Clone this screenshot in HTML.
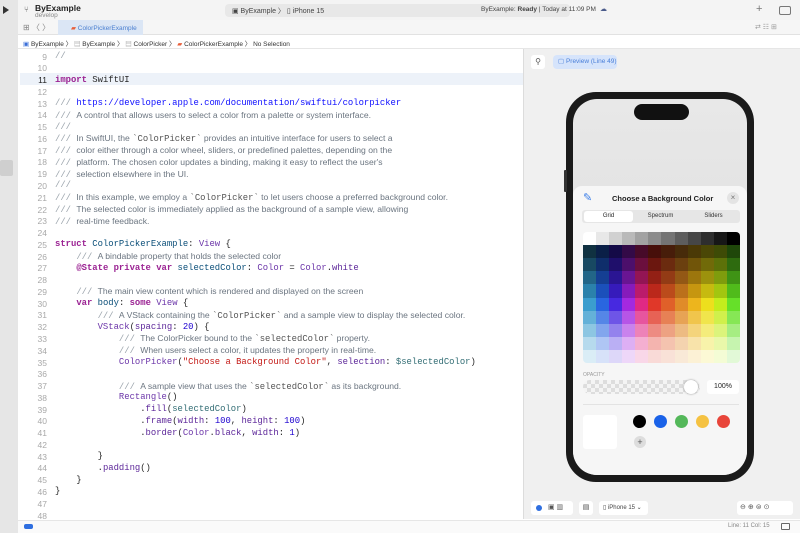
<!DOCTYPE html>
<html><head><meta charset="utf-8"><style>
*{margin:0;padding:0;box-sizing:border-box}
body{width:800px;height:533px;overflow:hidden;background:#fff;font-family:"Liberation Sans",sans-serif;position:relative}
.abs{position:absolute}
.ln{position:absolute;left:20px;width:27px;text-align:right;font-size:8.5px;color:#a8a8a8;font-family:"Liberation Sans",sans-serif}
.cl{position:absolute;left:55px;font-family:"Liberation Mono",monospace;font-size:8.9px;color:#262626;white-space:pre;line-height:12px}
.cl span{vertical-align:baseline}
.c{font-family:"Liberation Sans",sans-serif;color:#6b7580;font-size:8.6px}
.cm{color:#9aa3ab}
.k{color:#9b2393;font-weight:bold}
.t{color:#0b4f79}
.ty{color:#6c36a9}
.p{color:#326d74}
.s{color:#c41a16}
.n{color:#1c00cf}
.f{color:#5c2699}
.u{color:#0e0eff}
.bt{font-family:"Liberation Mono",monospace;color:#555}
</style></head><body>
<div class="abs" style="left:0;top:0;width:800px;height:20px;background:#f4f4f4"></div>
<div class="abs" style="left:0;top:0;width:18px;height:533px;background:#e6e6e6"></div>
<div class="abs" style="left:0;top:160px;width:13px;height:16px;background:#cfcfcf;border-radius:2px"></div>
<div class="abs" style="left:3px;top:6px;width:0;height:0;border-left:6px solid #333;border-top:4px solid transparent;border-bottom:4px solid transparent"></div>
<div class="abs" style="left:24px;top:5px;font-size:8px;color:#666">⑂</div>
<div class="abs" style="left:35px;top:3px;font-size:8.5px;font-weight:bold;color:#222">ByExample</div>
<div class="abs" style="left:35px;top:12px;font-size:6.5px;color:#888">develop</div>
<div class="abs" style="left:225px;top:4px;width:345px;height:13px;background:#e8e8e8;border-radius:4px"></div>
<div class="abs" style="left:232px;top:6px;font-size:7px;color:#444">▣ ByExample 〉 ▯ iPhone 15</div>
<div class="abs" style="left:481px;top:6px;font-size:6.5px;color:#444">ByExample: <b>Ready</b> | Today at 11:09 PM</div>
<div class="abs" style="left:600px;top:5px;font-size:7px;color:#4a5a8a">☁</div>
<div class="abs" style="left:756px;top:3px;font-size:11px;color:#777">+</div>
<div class="abs" style="left:779px;top:6px;width:12px;height:9px;border:1px solid #777;border-radius:2px"></div>
<div class="abs" style="left:18px;top:20px;width:782px;height:15px;background:#f6f6f6;border-bottom:1px solid #e2e2e2"></div>
<div class="abs" style="left:23px;top:22px;font-size:8px;color:#888">⊞ 〈 〉</div>
<div class="abs" style="left:58px;top:20px;width:85px;height:15px;background:#dbe6f5"></div>
<div class="abs" style="left:71px;top:24px;font-size:6.5px;color:#4a7fd0"><span style="color:#e8603c">▰</span> ColorPickerExample</div>
<div class="abs" style="left:755px;top:23px;font-size:7px;color:#999">⇄ ☷ ⊞</div>
<div class="abs" style="left:18px;top:36px;width:782px;height:13px;background:#fff;border-bottom:1px solid #e6e6e6"></div>
<div class="abs" style="left:23px;top:38px;font-size:6.5px;color:#333"><span style="color:#3b6fd8">▣</span> ByExample 〉 <span style="color:#888">▤</span> ByExample 〉 <span style="color:#888">▤</span> ColorPicker 〉 <span style="color:#e8603c">▰</span> ColorPickerExample 〉 No Selection</div>
<div class="abs" style="left:20px;top:73px;width:503px;height:12px;background:#edf2f9"></div>
<div id="code"></div>
<div class="abs" style="left:523px;top:49px;width:277px;height:470px;background:#f0f0f0;border-left:1px solid #dcdcdc"></div>
<div class="abs" style="left:531px;top:55px;width:14px;height:14px;background:#fff;border-radius:3px;font-size:8px;text-align:center;line-height:14px;color:#555">⚲</div>
<div class="abs" style="left:553px;top:55px;width:64px;height:14px;background:#d6e4fb;border-radius:4px;font-size:6.5px;color:#4a7fd8;line-height:14px;padding-left:5px">▢ Preview (Line 49)</div>
<div class="abs" style="left:566px;top:92px;width:188px;height:390px;background:#1a1a1a;border-radius:30px"></div>
<div class="abs" style="left:564px;top:170px;width:3px;height:22px;background:#333;border-radius:1px"></div>
<div class="abs" style="left:573px;top:99px;width:174px;height:376px;background:linear-gradient(#e8e8e8,#e0e0e0 50%,#dadada);border-radius:24px;overflow:hidden">
 <div class="abs" style="left:0;top:87px;width:174px;height:300px;background:#f6f6f6;border-radius:9px 9px 0 0"></div>
</div>
<div class="abs" style="left:634px;top:104px;width:55px;height:16px;background:#111;border-radius:8px"></div>
<div class="abs" style="left:583px;top:191px;font-size:11px;color:#3b7ee8">✎</div>
<div class="abs" style="left:612px;top:194px;font-size:7.5px;font-weight:bold;color:#222">Choose a Background Color</div>
<div class="abs" style="left:727px;top:192px;width:12px;height:12px;border-radius:6px;background:#e4e4e4;font-size:8px;color:#777;text-align:center;line-height:12px">×</div>
<div class="abs" style="left:582px;top:210px;width:158px;height:13px;background:#e6e6e6;border-radius:3px"></div>
<div class="abs" style="left:584px;top:211px;width:49px;height:11px;background:#fff;border-radius:3px"></div>
<div class="abs" style="left:584px;top:213px;width:49px;font-size:6px;text-align:center;color:#222">Grid</div>
<div class="abs" style="left:636px;top:213px;width:49px;font-size:6px;text-align:center;color:#333">Spectrum</div>
<div class="abs" style="left:689px;top:213px;width:49px;font-size:6px;text-align:center;color:#333">Sliders</div>
<div id="grid" class="abs" style="left:583px;top:232px;width:157px;height:131px;border-radius:4px;overflow:hidden"></div>
<div class="abs" style="left:583px;top:372px;font-size:5px;color:#999">OPACITY</div>
<div class="abs" style="left:583px;top:380px;width:117px;height:14px;border-radius:7px;background:repeating-conic-gradient(#ddd 0 25%,#f4f4f4 0 50%) 0 0/8px 8px"></div>
<div class="abs" style="left:684px;top:380px;width:14px;height:14px;border-radius:7px;background:#fff;box-shadow:0 0 2px #999"></div>
<div class="abs" style="left:707px;top:380px;width:32px;height:14px;background:#fff;border-radius:3px;font-size:7px;color:#222;text-align:center;line-height:14px">100%</div>
<div class="abs" style="left:583px;top:404px;width:156px;height:1px;background:#e3e3e3"></div>
<div class="abs" style="left:583px;top:415px;width:34px;height:34px;background:#fff;border-radius:3px"></div>
<div class="abs" style="left:633px;top:415px;width:13px;height:13px;border-radius:7px;background:#000"></div>
<div class="abs" style="left:654px;top:415px;width:13px;height:13px;border-radius:7px;background:#1a62e8"></div>
<div class="abs" style="left:675px;top:415px;width:13px;height:13px;border-radius:7px;background:#54b85a"></div>
<div class="abs" style="left:696px;top:415px;width:13px;height:13px;border-radius:7px;background:#f5c242"></div>
<div class="abs" style="left:717px;top:415px;width:13px;height:13px;border-radius:7px;background:#e8453a"></div>
<div class="abs" style="left:634px;top:436px;width:12px;height:12px;border-radius:6px;background:#ddd;font-size:9px;color:#555;text-align:center;line-height:12px">+</div>
<div class="abs" style="left:531px;top:501px;width:42px;height:14px;background:#fff;border-radius:3px"></div>
<div class="abs" style="left:536px;top:505px;width:6px;height:6px;border-radius:3px;background:#2f6fe0"></div>
<div class="abs" style="left:548px;top:503px;font-size:7px;color:#555">▣ ▥</div>
<div class="abs" style="left:579px;top:501px;width:14px;height:14px;background:#fff;border-radius:3px;font-size:7px;text-align:center;line-height:14px;color:#444">▤</div>
<div class="abs" style="left:599px;top:501px;width:49px;height:14px;background:#fff;border-radius:3px;font-size:6px;line-height:14px;color:#444;padding-left:4px">▯ iPhone 15 ⌄</div>
<div class="abs" style="left:737px;top:501px;width:56px;height:14px;background:#fff;border-radius:3px;font-size:7px;line-height:14px;color:#555;padding-left:3px;letter-spacing:2px">⊖⊕⊜⊙</div>
<div class="abs" style="left:18px;top:520px;width:782px;height:13px;background:#fafafa;border-top:1px solid #e6e6e6"></div>
<div class="abs" style="left:24px;top:524px;width:9px;height:5px;background:#2f6fe0;border-radius:2px"></div>
<div class="abs" style="left:728px;top:523px;font-size:6px;color:#888">Line: 11 Col: 15</div>
<div class="abs" style="left:781px;top:523px;width:9px;height:7px;border:1px solid #666;border-radius:1px"></div>
<script>
var L=[
[9,'//'],[10,''],[11,'<span class="k">import</span> SwiftUI'],[12,''],
[13,'<span class="cm">///</span> <span class="u">https://developer.apple.com/documentation/swiftui/colorpicker</span>'],
[14,'<span class="cm">///</span> <span class="c">A control that allows users to select a color from a palette or system interface.</span>'],
[15,'<span class="cm">///</span>'],
[16,'<span class="cm">///</span> <span class="c">In SwiftUI, the </span><span class="bt">`ColorPicker`</span><span class="c"> provides an intuitive interface for users to select a</span>'],
[17,'<span class="cm">///</span> <span class="c">color either through a color wheel, sliders, or predefined palettes, depending on the</span>'],
[18,'<span class="cm">///</span> <span class="c">platform. The chosen color updates a binding, making it easy to reflect the user\'s</span>'],
[19,'<span class="cm">///</span> <span class="c">selection elsewhere in the UI.</span>'],
[20,'<span class="cm">///</span>'],
[21,'<span class="cm">///</span> <span class="c">In this example, we employ a </span><span class="bt">`ColorPicker`</span><span class="c"> to let users choose a preferred background color.</span>'],
[22,'<span class="cm">///</span> <span class="c">The selected color is immediately applied as the background of a sample view, allowing</span>'],
[23,'<span class="cm">///</span> <span class="c">real-time feedback.</span>'],
[24,''],
[25,'<span class="k">struct</span> <span class="t">ColorPickerExample</span>: <span class="ty">View</span> {'],
[26,'    <span class="cm">///</span> <span class="c">A bindable property that holds the selected color</span>'],
[27,'    <span class="k">@State private var</span> <span class="t">selectedColor</span>: <span class="ty">Color</span> = <span class="ty">Color</span>.<span class="f">white</span>'],
[28,''],
[29,'    <span class="cm">///</span> <span class="c">The main view content which is rendered and displayed on the screen</span>'],
[30,'    <span class="k">var</span> <span class="t">body</span>: <span class="k">some</span> <span class="ty">View</span> {'],
[31,'        <span class="cm">///</span> <span class="c">A VStack containing the </span><span class="bt">`ColorPicker`</span><span class="c"> and a sample view to display the selected color.</span>'],
[32,'        <span class="ty">VStack</span>(<span class="f">spacing</span>: <span class="n">20</span>) {'],
[33,'            <span class="cm">///</span> <span class="c">The ColorPicker bound to the </span><span class="bt">`selectedColor`</span><span class="c"> property.</span>'],
[34,'            <span class="cm">///</span> <span class="c">When users select a color, it updates the property in real-time.</span>'],
[35,'            <span class="ty">ColorPicker</span>(<span class="s">"Choose a Background Color"</span>, <span class="f">selection</span>: <span class="p">$selectedColor</span>)'],
[36,''],
[37,'            <span class="cm">///</span> <span class="c">A sample view that uses the </span><span class="bt">`selectedColor`</span><span class="c"> as its background.</span>'],
[38,'            <span class="ty">Rectangle</span>()'],
[39,'                .<span class="f">fill</span>(<span class="p">selectedColor</span>)'],
[40,'                .<span class="f">frame</span>(<span class="f">width</span>: <span class="n">100</span>, <span class="f">height</span>: <span class="n">100</span>)'],
[41,'                .<span class="f">border</span>(<span class="ty">Color</span>.<span class="f">black</span>, <span class="f">width</span>: <span class="n">1</span>)'],
[42,''],[43,'        }'],[44,'        .<span class="f">padding</span>()'],[45,'    }'],[46,'}'],[47,''],[48,'']
];
var h='';
L.forEach(function(a){var y=56+(a[0]-9)*11.77-6;
h+='<div class="ln" style="top:'+(y+1.5)+'px'+(a[0]==11?';color:#222':'')+'">'+a[0]+'</div><div class="cl" style="top:'+y+'px">'+(a[0]==9?'<span class="cm">//</span>':a[1])+'</div>';});
document.getElementById('code').innerHTML=h;
var g='';var hues=[200,220,250,280,330,5,18,32,44,56,72,100];
for(var r=0;r<10;r++)for(var c=0;c<12;c++){var col;
if(r==0){var v=Math.round(255-c*(255/11));col='rgb('+v+','+v+','+v+')';}
else{var l=[16,24,33,42,52,62,72,82,91][r-1];var s=c>=8&&c<=10?85:75;if(c==0)s=60;col='hsl('+hues[c]+','+s+'%,'+l+'%)';}
g+='<div style="position:absolute;left:'+(c*13.08)+'px;top:'+(r*13.1)+'px;width:13.2px;height:13.2px;background:'+col+'"></div>';}
document.getElementById('grid').innerHTML=g;
</script>
</body></html>
